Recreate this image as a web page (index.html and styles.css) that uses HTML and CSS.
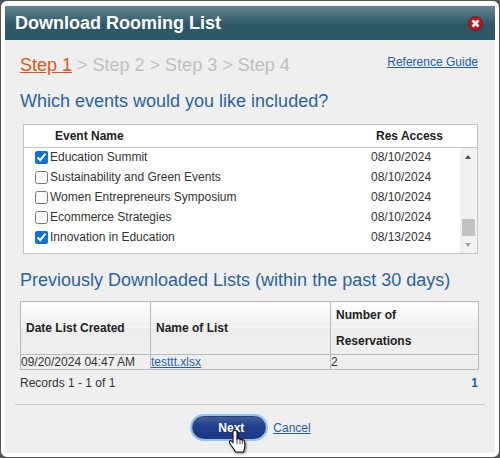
FILE: index.html
```html
<!DOCTYPE html>
<html lang="en">
<head>
    <meta charset="UTF-8">
    <title>Download Rooming List</title>
    <link rel="stylesheet" href="styles.css">
</head>
<body>
    <div class="modal">
        <!-- Title bar -->
        <div class="title-bar">
            <h1>Download Rooming List</h1>
            <svg class="close-icon" width="15" height="15" viewBox="0 0 15 15">
                <circle cx="7.5" cy="7.5" r="7" fill="#bd1420" stroke="#7d1a1f" stroke-width="1"/>
                <path d="M4.5 4.5 L10.5 10.5 M10.5 4.5 L4.5 10.5" stroke="#fff" stroke-width="2.6"/>
            </svg>
        </div>

        <div class="content">
            <div class="steps-row">
                <div class="steps">
                    <a class="step-current" href="#">Step 1</a> &gt; Step 2 &gt; Step 3 &gt; Step 4
                </div>
                <a class="guide-link" href="#">Reference Guide</a>
            </div>

            <h2 class="question">Which events would you like included?</h2>

            <!-- Events list -->
            <div class="events">
                <div class="events-head">
                    <div class="col-name">Event Name</div>
                    <div class="col-access">Res Access</div>
                </div>
                <div class="events-body">
                    <div class="events-rows">
                        <label class="event-row"><input type="checkbox" checked><span class="event-name">Education Summit</span><span class="event-date">08/10/2024</span></label>
                        <label class="event-row"><input type="checkbox"><span class="event-name">Sustainability and Green Events</span><span class="event-date">08/10/2024</span></label>
                        <label class="event-row"><input type="checkbox"><span class="event-name">Women Entrepreneurs Symposium</span><span class="event-date">08/10/2024</span></label>
                        <label class="event-row"><input type="checkbox"><span class="event-name">Ecommerce Strategies</span><span class="event-date">08/10/2024</span></label>
                        <label class="event-row"><input type="checkbox" checked><span class="event-name">Innovation in Education</span><span class="event-date">08/13/2024</span></label>
                    </div>
                    <div class="scrollbar">
                        <span class="arrow-up"></span>
                        <span class="thumb"></span>
                        <span class="arrow-down"></span>
                    </div>
                </div>
            </div>

            <h2 class="previous">Previously Downloaded Lists (within the past 30 days)</h2>

            <!-- Downloaded lists -->
            <table class="lists">
                <thead>
                    <tr>
                        <th class="date-col">Date List Created</th>
                        <th class="name-col">Name of List</th>
                        <th class="num-col">
                            <div class="th-line">Number of</div>
                            <div class="th-line">Reservations</div>
                        </th>
                    </tr>
                </thead>
                <tbody>
                    <tr>
                        <td>09/20/2024 04:47 AM</td>
                        <td><a href="#">testtt.xlsx</a></td>
                        <td>2</td>
                    </tr>
                </tbody>
            </table>

            <div class="records">
                <span>Records 1 - 1 of 1</span>
                <span class="page-num">1</span>
            </div>

            <div class="actions">
                <button class="next-button">Next</button>
                <a class="cancel-link" href="#">Cancel</a>
            </div>
        </div>

        <!-- Mouse pointer over the button -->
        <svg class="cursor" width="22" height="27" viewBox="0 0 22 27">
            <path d="M7 1.5 C8.2 1.5 9 2.2 9 3.5 L9 10 L10.2 9.6 C11 9.4 11.8 9.7 12 10.4 C12.8 10 13.8 10.2 14.2 11 C15 10.6 16 10.9 16.3 11.8 L17 16 C17 19 16 20.5 15.5 23 L7.5 23 C7 21 5.5 19.5 3.5 17 L1.6 14 C1 13 1.4 12 2.4 11.9 C3.4 11.8 4.4 12.6 5 13.5 L5 3.5 C5 2.2 5.8 1.5 7 1.5 Z" fill="#fff" stroke="#111" stroke-width="1.1"/>
            <path d="M9 10 L9 15 M12 10.4 L12 15 M14.3 11 L14.3 15" stroke="#111" stroke-width="0.8" fill="none"/>
        </svg>
    </div>
</body>
</html>
```

FILE: styles.css
```css
/* General body styling */
body {
    margin: 0;
    height: 458px;
    overflow: hidden;
    background-color: #555;
    font-family: "Liberation Sans", Arial, sans-serif;
}

/* Dialog box */
.modal {
    position: relative;
    box-sizing: border-box;
    width: 498px;
    height: 456px;
    margin: 1px;
    border: 4px solid #fff;
    border-radius: 6px;
    background-color: #efefef;
}

.title-bar {
    display: flex;
    align-items: center;
    justify-content: space-between;
    height: 34px;
    margin-top: 1px;
    padding: 0 10px;
    background: linear-gradient(#648590, #2d5868 55%, #2d5868);
}

.title-bar h1 {
    margin: 0;
    font-size: 18px;
    font-weight: bold;
    color: #fff;
}

.close-icon {
    margin-right: 2px;
}

.content {
    padding: 0 15px;
}

/* Steps */
.steps-row {
    display: flex;
    justify-content: space-between;
    padding-top: 15px;
}

.steps {
    font-size: 18px;
    color: #bfbfbf;
}

.step-current {
    color: #d9581a;
}

.guide-link {
    margin-right: 2px;
    font-size: 12px;
    color: #1f5ea8;
}

.question {
    margin: 15px 0 0;
    font-size: 18px;
    font-weight: normal;
    color: #2a639f;
}

/* Events list */
.events {
    box-sizing: border-box;
    width: 455px;
    height: 130px;
    margin: 12px 0 0 3px;
    border: 1px solid #c6c6c6;
    background-color: #fff;
}

.events-head {
    display: flex;
    height: 22px;
    align-items: center;
    border-bottom: 1px solid #c6c6c6;
    font-size: 12px;
    font-weight: bold;
    color: #222;
}

.col-name {
    width: 332px;
    padding-left: 31px;
    box-sizing: border-box;
}

.col-access {
    padding-left: 20px;
}

.events-body {
    display: flex;
    justify-content: space-between;
    height: 105px;
}

.events-rows {
    margin-top: -1px;
}

.event-row {
    display: flex;
    align-items: center;
    height: 20px;
    font-size: 12px;
    color: #333;
}

.event-row input {
    width: 13px;
    height: 13px;
    margin: 0 2px 0 11px;
    accent-color: #0b6fe0;
}

.event-name {
    width: 321px;
}

.scrollbar {
    position: relative;
    width: 17px;
    background-color: #f1f1f1;
}

.arrow-up,
.arrow-down {
    position: absolute;
    left: 5px;
    width: 0;
    height: 0;
    border-left: 3.5px solid transparent;
    border-right: 3.5px solid transparent;
}

.arrow-up {
    top: 7px;
    border-bottom: 4px solid #505050;
}

.arrow-down {
    bottom: 6px;
    border-top: 4px solid #a3a3a3;
}

.thumb {
    position: absolute;
    left: 2px;
    right: 2px;
    top: 71px;
    height: 17px;
    background-color: #c1c1c1;
}

.previous {
    margin: 16px 0 0;
    font-size: 18px;
    font-weight: normal;
    color: #2a639f;
}

/* Downloaded lists table */
.lists {
    width: 459px;
    margin-top: 10px;
    table-layout: fixed;
    border-collapse: collapse;
    font-size: 12px;
    color: #333;
}

.lists th,
.lists td {
    box-sizing: border-box;
    border: 1px solid #b9b9b9;
}

.lists th {
    padding: 0 0 0 5px;
    text-align: left;
    color: #222;
    background: linear-gradient(#fff, #f0f0f0 45%, #f8f8f8 48%, #ececec 50%, #efefef);
}

.date-col {
    width: 130px;
}

.name-col {
    width: 180px;
}

.th-line {
    height: 26px;
    line-height: 26px;
}

.lists td {
    height: 14px;
    padding: 0;
    line-height: 14px;
}

.lists a {
    color: #1f5ea8;
}

.records {
    display: flex;
    justify-content: space-between;
    width: 458px;
    margin-top: 6px;
    font-size: 12px;
    color: #333;
}

.page-num {
    font-weight: bold;
    color: #1f5ea8;
}

/* Bottom buttons */
.actions {
    display: flex;
    align-items: center;
    justify-content: center;
    gap: 7px;
    margin: 14px -5px 0;
    padding: 11px 0 0 3px;
    border-top: 1px solid #c6c6c6;
}

.next-button {
    width: 74px;
    height: 23px;
    padding: 0 0 0 4px;
    border: 1px solid #2a3d78;
    border-radius: 12px;
    background: linear-gradient(#44609a, #1f3d8c 45%, #1c3a86);
    box-shadow: 0 0 0 2px #8fc4f2;
    color: #fff;
    font-family: inherit;
    font-size: 12px;
    font-weight: bold;
}

.cancel-link {
    font-size: 12px;
    color: #1f5ea8;
}

.cursor {
    position: absolute;
    left: 223px;
    top: 424px;
    filter: drop-shadow(1px 1px 1px rgba(0, 0, 0, 0.5));
}
```
